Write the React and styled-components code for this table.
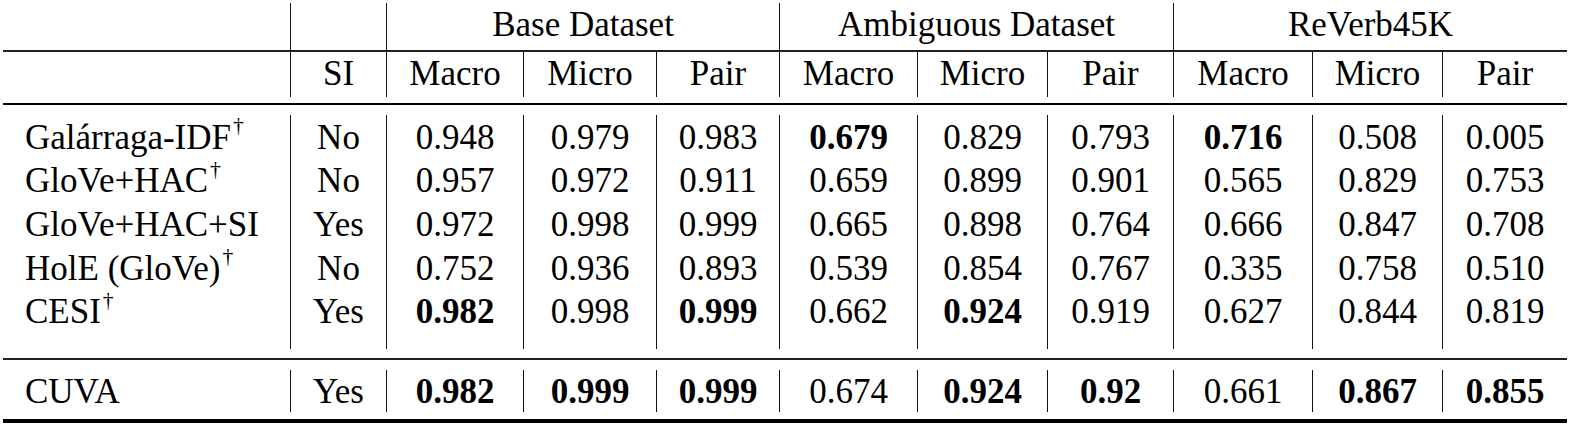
import React from 'react'
import styled, { createGlobalStyle } from 'styled-components'

const GlobalStyle = createGlobalStyle`
  html, body {
    margin: 0;
    padding: 0;
    background: #fff;
  }
  body {
    font-family: 'Liberation Serif', 'Times New Roman', serif;
    color: #000;
  }
`

const COLS = '287px 96px 137px 133px 123px 138px 130px 126px 139px 130px 125px'

const Table = styled.div`
  width: 1564px;
  margin-left: 3px;
  padding-top: 3px;
  font-size: 35px;
`

const Row = styled.div`
  display: grid;
  grid-template-columns: ${COLS};
  height: ${props => props.$h}px;
`

const Cell = styled.div`
  grid-column: span ${props => props.$span || 1};
  border-left: ${props => (props.$line ? '1px solid #111' : 'none')};
  display: flex;
  align-items: center;
  justify-content: ${props => (props.$left ? 'flex-start' : 'center')};
  padding-left: ${props => (props.$left ? '22px' : '0')};
  padding-bottom: ${props => props.$extra || 0}px;
  font-weight: ${props => (props.$bold ? 'bold' : 'normal')};
  line-height: 1;
  white-space: nowrap;
`

const Dagger = styled.span`
  font-size: 0.62em;
  line-height: 0;
  position: relative;
  top: -0.55em;
  margin-left: 2px;
`

const Rule = styled.div`
  height: ${props => props.$w}px;
  background: ${props => props.$color || '#000'};
  margin-top: ${props => props.$above || 0}px;
  margin-bottom: ${props => props.$below || 0}px;
`

const groups = ['Base Dataset', 'Ambiguous Dataset', 'ReVerb45K']
const metrics = ['Macro', 'Micro', 'Pair']

const rows = [
  { name: 'Galárraga-IDF', dag: true, si: 'No', vals: ['0.948', '0.979', '0.983', '*0.679', '0.829', '0.793', '*0.716', '0.508', '0.005'] },
  { name: 'GloVe+HAC', dag: true, si: 'No', vals: ['0.957', '0.972', '0.911', '0.659', '0.899', '0.901', '0.565', '0.829', '0.753'] },
  { name: 'GloVe+HAC+SI', si: 'Yes', vals: ['0.972', '0.998', '0.999', '0.665', '0.898', '0.764', '0.666', '0.847', '0.708'] },
  { name: 'HolE (GloVe)', dag: true, si: 'No', vals: ['0.752', '0.936', '0.893', '0.539', '0.854', '0.767', '0.335', '0.758', '0.510'] },
  { name: 'CESI', dag: true, si: 'Yes', vals: ['*0.982', '0.998', '*0.999', '0.662', '*0.924', '0.919', '0.627', '0.844', '0.819'] },
]

const ours = { name: 'CUVA', si: 'Yes', vals: ['*0.982', '*0.999', '*0.999', '0.674', '*0.924', '*0.92', '0.661', '*0.867', '*0.855'] }

const heights = [44, 43, 44, 44, 59]

const DataRow = ({ row, h, extra }) => (
  <Row $h={h}>
    <Cell $left $extra={extra}>
      {row.name}
      {row.dag && <Dagger>†</Dagger>}
    </Cell>
    <Cell $line $extra={extra}>{row.si}</Cell>
    {row.vals.map((v, i) => {
      const bold = v.startsWith('*')
      return (
        <Cell key={i} $line $bold={bold} $extra={extra}>
          {bold ? v.slice(1) : v}
        </Cell>
      )
    })}
  </Row>
)

export default function App() {
  return (
    <>
      <GlobalStyle />
      <Table>
        <Row $h={47}>
          <Cell />
          <Cell $line />
          {groups.map(g => (
            <Cell key={g} $line $span={3} $extra={4}>{g}</Cell>
          ))}
        </Row>
        <Rule $w={2} $color="#222" />
        <Row $h={45}>
          <Cell />
          <Cell $line $extra={2}>SI</Cell>
          {groups.map(g =>
            metrics.map(m => (
              <Cell key={g + m} $line $extra={2}>{m}</Cell>
            ))
          )}
        </Row>
        <Rule $w={2} $above={6} $below={10} />
        {rows.map((r, i) => (
          <DataRow key={r.name} row={r} h={heights[i]} extra={i === 4 ? 16 : 0} />
        ))}
        <Rule $w={2} $color="#222" $above={9} $below={10} />
        <DataRow row={ours} h={42} />
        <Rule $w={4} $above={7} />
      </Table>
    </>
  )
}
